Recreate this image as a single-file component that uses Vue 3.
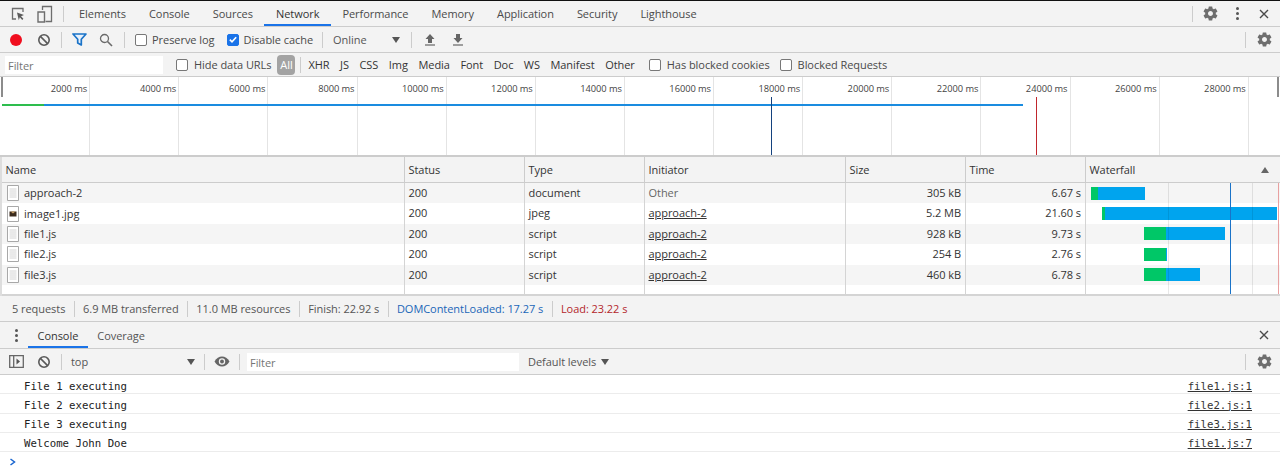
<script setup>
const tabs = [
  { label: 'Elements' }, { label: 'Console' }, { label: 'Sources' }, { label: 'Network', active: true },
  { label: 'Performance' }, { label: 'Memory' }, { label: 'Application' }, { label: 'Security' }, { label: 'Lighthouse' },
]
const types = ['XHR', 'JS', 'CSS', 'Img', 'Media', 'Font', 'Doc', 'WS', 'Manifest', 'Other']
const ticks = ['2000', '4000', '6000', '8000', '10000', '12000', '14000', '16000', '18000', '20000', '22000', '24000', '26000', '28000']
const columns = ['Name', 'Status', 'Type', 'Initiator', 'Size', 'Time']
const rows = [
  { name: 'approach-2', type: 'document', initiator: 'Other', size: '305 kB', time: '6.67 s', greenL: 5, greenW: 7, blueW: 47 },
  { name: 'image1.jpg', image: true, type: 'jpeg', initiator: 'approach-2', link: true, size: '5.2 MB', time: '21.60 s', greenL: 15.5, greenW: 3, blueW: 172.5 },
  { name: 'file1.js', type: 'script', initiator: 'approach-2', link: true, size: '928 kB', time: '9.73 s', greenL: 58, greenW: 22, blueW: 59 },
  { name: 'file2.js', type: 'script', initiator: 'approach-2', link: true, size: '254 B', time: '2.76 s', greenL: 58, greenW: 22, blueW: 1 },
  { name: 'file3.js', type: 'script', initiator: 'approach-2', link: true, size: '460 kB', time: '6.78 s', greenL: 58, greenW: 22, blueW: 34 },
]
const logs = [
  { text: 'File 1 executing', src: 'file1.js:1' },
  { text: 'File 2 executing', src: 'file2.js:1' },
  { text: 'File 3 executing', src: 'file3.js:1' },
  { text: 'Welcome John Doe', src: 'file1.js:7' },
]
</script>

<template>
  <div class="devtools">
    <svg class="defs" aria-hidden="true">
      <symbol id="gear" viewBox="0 0 24 24"><path d="M19.43 12.98c.04-.32.07-.64.07-.98s-.03-.66-.07-.98l2.11-1.65c.19-.15.24-.42.12-.64l-2-3.46c-.12-.22-.39-.3-.61-.22l-2.49 1c-.52-.4-1.08-.73-1.69-.98l-.38-2.65C14.46 2.18 14.25 2 14 2h-4c-.25 0-.46.18-.49.42l-.38 2.65c-.61.25-1.17.59-1.69.98l-2.49-1c-.23-.09-.49 0-.61.22l-2 3.46c-.13.22-.07.49.12.64l2.11 1.65c-.04.32-.07.65-.07.98s.03.66.07.98l-2.11 1.65c-.19.15-.24.42-.12.64l2 3.46c.12.22.39.3.61.22l2.49-1c.52.4 1.08.73 1.69.98l.38 2.65c.03.24.24.42.49.42h4c.25 0 .46-.18.49-.42l.38-2.65c.61-.25 1.17-.59 1.69-.98l2.49 1c.23.09.49 0 .61-.22l2-3.46c.12-.22.07-.49-.12-.64l-2.11-1.65zM12 15.5c-1.93 0-3.5-1.57-3.5-3.5s1.57-3.5 3.5-3.5 3.5 1.57 3.5 3.5-1.57 3.5-3.5 3.5z" fill="#6e6e6e"/></symbol>
      <symbol id="clear" viewBox="0 0 14 14"><circle cx="7" cy="7" r="5.2" fill="none" stroke="#5a5a5a" stroke-width="1.6"/><path d="M3.4 3.4l7.2 7.2" stroke="#5a5a5a" stroke-width="1.6"/></symbol>
      <symbol id="close" viewBox="0 0 10 10"><path d="M1 1l8 8M9 1l-8 8" stroke="#4a4a4a" stroke-width="1.4" fill="none"/></symbol>
      <symbol id="file" viewBox="0 0 12 16"><path d="M.5.5h11v15H.5z" fill="#fff" stroke="#a8a8a8"/><path d="M2.5 4h7M2.5 6h7M2.5 8h7M2.5 10h7M2.5 12h7" stroke="#d4d4d4"/></symbol>
    </svg>

    <header class="bar tabs-bar">
      <svg class="ic inspect" width="16" height="16" viewBox="0 0 16 16"><path d="M6 13H2.5V2.5H13V6" fill="none" stroke="#6e6e6e" stroke-width="1.3"/><path d="M7 6.5l7 2.600-3 1.100 2.400 2.600-1.200 1.100-2.400-2.600-1 3z" fill="#5c5c5c"/></svg>
      <svg class="ic device" width="16" height="18" viewBox="0 0 16 18"><path d="M5.5 5V1.500h9v15h-6" fill="none" stroke="#6e6e6e" stroke-width="1.3"/><path d="M1 7h6.500v10H1z" fill="none" stroke="#6e6e6e" stroke-width="1.4"/></svg>
      <i class="sep first-sep"></i>
      <nav class="tabs">
        <span v-for="t in tabs" :key="t.label" class="tab" :class="{ active: t.active }">{{ t.label }}</span>
      </nav>
      <span class="spring"></span>
      <i class="sep"></i>
      <svg class="gear-main" width="17" height="17"><use href="#gear"/></svg>
      <span class="dots"><b></b><b></b><b></b></span>
      <svg class="close-main" width="10" height="10"><use href="#close"/></svg>
    </header>

    <section class="bar tool-bar">
      <span class="record"></span>
      <svg class="clear-ic" width="14" height="14"><use href="#clear"/></svg>
      <i class="sep sep-a"></i>
      <svg class="funnel" width="15" height="13" viewBox="0 0 15 13"><path d="M1 1h13L9.3 6.300V12L5.700 10V6.300z" fill="#e8f1fb" stroke="#1a73c8" stroke-width="1.7" stroke-linejoin="round"/></svg>
      <svg class="search" width="14" height="14" viewBox="0 0 14 14"><circle cx="5.5" cy="5.5" r="4" fill="none" stroke="#6a6a6a" stroke-width="1.3"/><path d="M8.5 8.500l4.500 4.500" stroke="#6a6a6a" stroke-width="1.6"/></svg>
      <i class="sep sep-b"></i>
      <span class="check"></span><span class="check-label">Preserve log</span>
      <span class="check checked"><svg width="11" height="11" viewBox="0 0 11 11"><path d="M2 5.600l2.400 2.400L9 3" fill="none" stroke="#fff" stroke-width="1.8"/></svg></span><span class="check-label">Disable cache</span>
      <i class="sep sep-c"></i>
      <span class="online">Online</span>
      <i class="caret"></i>
      <i class="sep sep-d"></i>
      <svg class="updown up" width="12" height="13" viewBox="0 0 12 13"><path d="M6 1l4.500 5H8v4H4V6H1.500z" fill="#666"/><path d="M1 12h10" stroke="#666" stroke-width="1.2"/></svg>
      <svg class="updown down" width="12" height="13" viewBox="0 0 12 13"><path d="M6 10l4.500-5H8V1H4v4H1.500z" fill="#666"/><path d="M1 12h10" stroke="#666" stroke-width="1.2"/></svg>
      <span class="spring"></span>
      <i class="sep"></i>
      <svg class="gear-tool" width="17" height="17"><use href="#gear"/></svg>
    </section>

    <section class="bar filter-bar">
      <span class="filter-input">Filter</span>
      <span class="check small"></span><span class="check-label wide">Hide data URLs</span>
      <span class="all">All</span>
      <i class="sep sep-all"></i>
      <span class="types"><span v-for="t in types" :key="t">{{ t }}</span></span>
      <span class="check small c1"></span><span class="check-label wide">Has blocked cookies</span>
      <span class="check small c2"></span><span class="check-label wide">Blocked Requests</span>
    </section>

    <section class="overview">
      <div v-for="t in ticks" :key="t" class="tick">{{ t }} ms</div>
      <div class="tick tick-last"></div>
      <i class="ov-green"></i>
      <i class="ov-blue"></i>
      <i class="ov-dcl"></i>
      <i class="ov-load"></i>
      <i class="handle handle-l"></i>
      <i class="handle handle-r"></i>
    </section>

    <section class="table">
      <div class="thead grid">
        <div v-for="c in columns" :key="c" class="th">{{ c }}</div>
        <div class="th wf-head">Waterfall<i class="sort"></i></div>
      </div>
      <div class="tbody">
        <div v-for="r in rows" :key="r.name" class="grid row">
          <div class="td name">
            <svg v-if="!r.image" class="file-ic" width="12" height="16"><use href="#file"/></svg>
            <svg v-else class="file-ic" width="12" height="16" viewBox="0 0 12 16"><path d="M.5.5h11v15H.5z" fill="#fff" stroke="#a8a8a8"/><path d="M2.5 5.500h7v5h-7z" fill="#3a2a1c"/><path d="M3.5 5.500l2.500 2 2.500-2z" fill="#c9a26a"/></svg>
            {{ r.name }}
          </div>
          <div class="td">200</div>
          <div class="td">{{ r.type }}</div>
          <div class="td" :class="r.link ? 'link' : 'muted'"><span>{{ r.initiator }}</span></div>
          <div class="td num">{{ r.size }}</div>
          <div class="td num">{{ r.time }}</div>
          <div class="td wf">
            <i class="bar-green" :style="{ left: r.greenL + 'px', width: r.greenW + 'px' }"></i>
            <i class="bar-blue" :style="{ left: r.greenL + r.greenW + 'px', width: r.blueW + 'px' }"></i>
          </div>
        </div>
        <div class="grid filler">
          <div v-for="n in 7" :key="n" class="td"></div>
        </div>
        <i class="wf-line l1"></i>
        <i class="wf-line l2"></i>
        <i class="wf-dcl"></i>
        <i class="wf-load"></i>
      </div>
    </section>

    <footer class="status">
      <span>5 requests</span>
      <span>6.9 MB transferred</span>
      <span>11.0 MB resources</span>
      <span>Finish: 22.92 s</span>
      <span class="blue">DOMContentLoaded: 17.27 s</span>
      <span class="red">Load: 23.22 s</span>
    </footer>

    <section class="bar drawer-tabs">
      <span class="dots drawer-dots"><b></b><b></b><b></b></span>
      <span class="dtab active">Console</span>
      <span class="dtab">Coverage</span>
      <span class="spring"></span>
      <svg class="close-drawer" width="10" height="10"><use href="#close"/></svg>
    </section>

    <section class="bar console-bar">
      <svg class="sidebar-ic" width="15" height="13" viewBox="0 0 15 13"><path d="M.7.7h13.600v11.600H.7zM4.700.7v11.600" fill="none" stroke="#666" stroke-width="1.3"/><path d="M7.5 3.500l3.500 3-3.500 3z" fill="#555"/></svg>
      <svg class="clear-c" width="14" height="14"><use href="#clear"/></svg>
      <i class="sep sep-e"></i>
      <span class="context">top</span>
      <i class="caret"></i>
      <i class="sep sep-f"></i>
      <svg class="eye" width="16" height="11" viewBox="0 0 16 11"><path d="M.5 5.500C2.500 2 5 .5 8 .5s5.500 1.500 7.500 5c-2 3.500-4.500 5-7.500 5s-5.500-1.500-7.500-5z" fill="#666"/><circle cx="8" cy="5.500" r="3.200" fill="#f3f3f3"/><circle cx="8" cy="5.500" r="1.900" fill="#666"/></svg>
      <i class="sep sep-g"></i>
      <span class="console-filter">Filter</span>
      <span class="levels">Default levels</span>
      <i class="caret caret-levels"></i>
      <span class="spring"></span>
      <i class="sep"></i>
      <svg class="gear-tool" width="17" height="17"><use href="#gear"/></svg>
    </section>

    <section class="logs">
      <div v-for="l in logs" :key="l.src + l.text" class="log">
        <span>{{ l.text }}</span>
        <span class="src">{{ l.src }}</span>
      </div>
      <svg class="prompt" width="8" height="8" viewBox="0 0 8 8"><path d="M1.5 1l4 3-4 3" fill="none" stroke="#1a66d0" stroke-width="1.5"/></svg>
    </section>
  </div>
</template>

<style>
html, body { margin: 0; background: #fff; }
</style>

<style scoped>
.devtools { width: 1280px; height: 474px; overflow: hidden; font: 11px/16px "Open Sans", sans-serif; letter-spacing: -.05px; color: #333; background: #fff; border-top: 1px solid #111; box-sizing: border-box; }
.defs { position: absolute; width: 0; height: 0; }
.bar { display: flex; align-items: center; background: #f3f3f3; border-bottom: 1px solid #ccc; box-sizing: border-box; white-space: nowrap; }
.spring { flex: 1; }
.sep { width: 1px; height: 16px; background: #ccc; flex: none; }
.tabs-bar { height: 26px; padding-left: 10px; }
.inspect { margin-right: 11px; }
.first-sep { margin-left: 10px; margin-right: 6.5px; }
.tabs { display: flex; align-self: stretch; }
.tab { padding: 0 11.5px; line-height: 25px; color: #4a4a4a; }
.tab.active { color: #333; border-bottom: 2px solid #1a73e8; height: 25px; box-sizing: border-box; }
.tab:first-child { margin-left: -3px; }
.gear-main { margin-left: 9px; }
.dots { display: inline-flex; flex-direction: column; gap: 2px; margin-left: 17px; }
.dots b { width: 3px; height: 3px; border-radius: 50%; background: #555; }
.close-main { margin: 0 11px 0 20px; }

.tool-bar { height: 26px; padding-left: 10px; }
.record { width: 12px; height: 12px; border-radius: 50%; background: #f00e1e; }
.clear-ic { margin-left: 15px; }
.sep-a { margin-left: 10px; }
.funnel { margin-left: 10px; }
.search { margin-left: 12px; }
.sep-b { margin-left: 11px; }
.check { width: 12px; height: 12px; border: 1px solid #777; border-radius: 2px; box-sizing: border-box; background: #fff; flex: none; margin-left: 10px; display: inline-flex; align-items: center; justify-content: center; }
.check.checked { background: #1a73e8; border-color: #1a73e8; margin-left: 12px; }
.check-label { margin-left: 5px; color: #4a4a4a; }
.check-label.wide { margin-left: 6px; }
.sep-c { margin-left: 9px; }
.online { margin-left: 10px; width: 59px; color: #555; }
.caret { width: 0; height: 0; border: 4px solid transparent; border-top: 6px solid #555; border-bottom: 0; flex: none; }
.sep-d { margin-left: 11px; }
.up { margin-left: 12px; }
.down { margin-left: 16px; }
.gear-tool { margin: 0 7px 0 10px; }

.filter-bar { height: 24px; padding: 1px 0 0 5px; }
.filter-input { width: 158px; height: 18px; line-height: 19px; background: #fff; padding-left: 3px; box-sizing: border-box; color: #757575; }
.check.small { margin-left: 13px; }
.all { margin-left: 6px; width: 18px; height: 20px; line-height: 20px; text-align: center; background: #a3a3a3; color: #fff; border-radius: 4px; }
.sep-all { margin-left: 5px; }
.types { display: flex; gap: 10.5px; margin-left: 7px; color: #333; }
.check.c1 { margin-left: 14px; }
.check.c2 { margin-left: 10px; }

.overview { position: relative; display: flex; height: 78px; padding-left: 1px; border-bottom: 2px solid #ccc; background: #fff; }
.tick { flex: none; width: 89.13px; box-sizing: border-box; border-right: 1px solid #e4e4e4; text-align: right; padding: 4px 2px 0 0; font-size: 9.3px; line-height: 16px; color: #444; }
.tick-last { border-right: 0; flex: 1; }
.ov-green, .ov-blue { position: absolute; top: 27px; height: 2px; }
.ov-green { left: 2px; width: 42px; background: #2ebd4e; }
.ov-blue { left: 44px; width: 979px; background: #1a8ce0; }
.ov-dcl, .ov-load { position: absolute; top: 20px; width: 1px; height: 58px; }
.ov-dcl { left: 771px; background: #14427e; }
.ov-load { left: 1036px; background: #c0272d; }
.handle { position: absolute; top: 0; width: 2px; height: 20px; background: #8c8c8c; }
.handle-l { left: 1px; }
.handle-r { right: 1px; }

.table { padding-left: 2px; background: #ddd; }
.grid { display: grid; grid-template-columns: 403px 120px 120px 201px 120px 120px 1fr; }
.thead { height: 25px; background: #f3f3f3; border-bottom: 1px solid #ccc; }
.th { line-height: 25px; padding-left: 3.5px; border-right: 1px solid #ccc; box-sizing: border-box; white-space: nowrap; }
.wf-head { position: relative; border-right: 0; }
.sort { position: absolute; right: 11px; top: 10px; width: 0; height: 0; border: 4px solid transparent; border-bottom: 6px solid #666; border-top: 0; }
.tbody { position: relative; height: 111px; background: #fff; border-bottom: 2px solid #d4d4d4; }
.row { height: 20.4px; }
.row:nth-child(odd) { background: #f5f5f5; }
.td { line-height: 20px; padding-left: 3.5px; border-right: 1px solid #d4d4d4; box-sizing: border-box; white-space: nowrap; overflow: hidden; position: relative; }
.filler { height: 9px; }
.filler .td { height: 9px; }
.td:last-child { border-right: 0; }
.name { display: flex; align-items: center; gap: 5px; padding-left: 5px; }
.file-ic { flex: none; }
.link span { text-decoration: underline; }
.muted { color: #666; }
.num { text-align: right; padding-right: 4px; }
.wf { overflow: visible; }
.bar-green, .bar-blue { position: absolute; top: 3.5px; height: 13px; }
.bar-green { background: #00c767; }
.bar-blue { background: #00a4ee; }
.wf-line, .wf-dcl, .wf-load { position: absolute; top: 0; bottom: 0; width: 1px; }
.wf-line { background: rgba(0,0,0,.09); }
.l1 { left: 1166px; }
.l2 { left: 1250px; }
.wf-dcl { left: 1228px; background: #1a73c8; }
.wf-load { left: 1276px; background: #e8a0a0; }

.status { display: flex; align-items: center; height: 25px; background: #f3f3f3; padding-left: 12px; border-bottom: 1px solid #ccc; color: #555; white-space: nowrap; }
.status span { padding-right: 8.7px; margin-right: 8px; border-right: 1px solid #ccc; }
.status span:last-child { border-right: 0; }
.status .blue { color: #1a66b8; }
.status .red { color: #b3262b; }

.drawer-tabs { height: 27px; padding-left: 15px; }
.drawer-dots { margin-left: 0; margin-right: 10px; }
.dtab { padding: 0 9.5px; line-height: 27px; color: #555; }
.dtab.active { color: #333; border-bottom: 2px solid #1a73e8; height: 26px; box-sizing: border-box; }
.close-drawer { margin-right: 11px; }

.console-bar { height: 26px; padding-left: 9px; }
.clear-c { margin-left: 13px; }
.sep-e { margin-left: 10px; }
.context { margin-left: 9px; width: 116px; color: #555; }
.sep-f { margin-left: 9px; }
.eye { margin-left: 9px; }
.sep-g { margin-left: 9px; }
.console-filter { margin-left: 7px; width: 272px; height: 18px; line-height: 19px; padding-left: 3px; background: #fff; color: #757575; box-sizing: border-box; }
.levels { margin-left: 9px; color: #555; }
.caret-levels { margin-left: 5px; }

.logs { font: 10.7px/18px "DejaVu Sans Mono", monospace; letter-spacing: 0; color: #222; }
.log { display: flex; justify-content: space-between; height: 19.3px; line-height: 18px; padding: 2.5px 28px 0 24px; box-sizing: border-box; border-bottom: 1px solid #ececec; }
.src { text-decoration: underline; color: #333; }
.prompt { display: block; margin: 6px 0 0 9px; }
</style>
